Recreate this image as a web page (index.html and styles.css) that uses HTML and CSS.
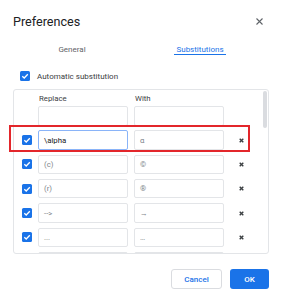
FILE: index.html
```html
<!DOCTYPE html>
<html>
<head>
<meta charset="utf-8">
<link rel="stylesheet" href="styles.css">
</head>
<body>
<div class="dialog">
  <div class="header">
    <div class="title">Preferences</div>
    <svg class="close" width="7" height="7" viewBox="0 0 7 7"><path d="M0.5 0.5L6.5 6.5M6.5 0.5L0.5 6.5" stroke="#5f6368" stroke-width="1.1" fill="none"/></svg>
  </div>
  <div class="tabs">
    <div class="tab"><span class="tab-label">General</span></div>
    <div class="tab active"><span class="tab-label">Substitutions</span></div>
  </div>
  <div class="auto">
    <span class="cb"><svg width="10" height="10" viewBox="0 0 10 10"><path d="M2.3 5.2L4.2 7L7.8 3.2" stroke="#fff" stroke-width="1.3" fill="none"/></svg></span>
    <span class="auto-label">Automatic substitution</span>
  </div>
  <div class="table">
    <div class="thead">
      <span></span><span class="th">Replace</span><span class="th">With</span><span></span>
    </div>
    <div class="rows">
      <span></span><div class="inp"></div><div class="inp"></div><span></span>

      <span class="cb"><svg width="10" height="10" viewBox="0 0 10 10"><path d="M2.3 5.2L4.2 7L7.8 3.2" stroke="#fff" stroke-width="1.3" fill="none"/></svg></span>
      <div class="inp focus dark">\alpha</div><div class="inp">α</div><svg class="del" width="5" height="5" viewBox="0 0 5 5"><path d="M0.7 0.7L4.3 4.3M4.3 0.7L0.7 4.3" stroke="#3c4043" stroke-width="1.4" fill="none"/></svg>

      <span class="cb"><svg width="10" height="10" viewBox="0 0 10 10"><path d="M2.3 5.2L4.2 7L7.8 3.2" stroke="#fff" stroke-width="1.3" fill="none"/></svg></span>
      <div class="inp">(c)</div><div class="inp">©</div><svg class="del" width="5" height="5" viewBox="0 0 5 5"><path d="M0.7 0.7L4.3 4.3M4.3 0.7L0.7 4.3" stroke="#3c4043" stroke-width="1.4" fill="none"/></svg>

      <span class="cb"><svg width="10" height="10" viewBox="0 0 10 10"><path d="M2.3 5.2L4.2 7L7.8 3.2" stroke="#fff" stroke-width="1.3" fill="none"/></svg></span>
      <div class="inp">(r)</div><div class="inp">®</div><svg class="del" width="5" height="5" viewBox="0 0 5 5"><path d="M0.7 0.7L4.3 4.3M4.3 0.7L0.7 4.3" stroke="#3c4043" stroke-width="1.4" fill="none"/></svg>

      <span class="cb"><svg width="10" height="10" viewBox="0 0 10 10"><path d="M2.3 5.2L4.2 7L7.8 3.2" stroke="#fff" stroke-width="1.3" fill="none"/></svg></span>
      <div class="inp">--&gt;</div><div class="inp">→</div><svg class="del" width="5" height="5" viewBox="0 0 5 5"><path d="M0.7 0.7L4.3 4.3M4.3 0.7L0.7 4.3" stroke="#3c4043" stroke-width="1.4" fill="none"/></svg>

      <span class="cb"><svg width="10" height="10" viewBox="0 0 10 10"><path d="M2.3 5.2L4.2 7L7.8 3.2" stroke="#fff" stroke-width="1.3" fill="none"/></svg></span>
      <div class="inp">...</div><div class="inp">…</div><svg class="del" width="5" height="5" viewBox="0 0 5 5"><path d="M0.7 0.7L4.3 4.3M4.3 0.7L0.7 4.3" stroke="#3c4043" stroke-width="1.4" fill="none"/></svg>

      <span></span><div class="inp"></div><div class="inp"></div><span></span>
    </div>
    <div class="scroll-thumb"></div>
  </div>
  <div class="footer">
    <button class="btn cancel">Cancel</button>
    <button class="btn ok">OK</button>
  </div>
  <div class="highlight"></div>
</div>
</body>
</html>
```

FILE: styles.css
```css
html, body {
  margin: 0;
  padding: 0;
  background: #fff;
}
body {
  font-family: Roboto, "Liberation Sans", Arial, sans-serif;
  color: #202124;
}
.dialog {
  position: relative;
  width: 283px;
  height: 300px;
  overflow: hidden;
  background: #fff;
}
.header {
  display: flex;
  justify-content: space-between;
  align-items: center;
  padding: 11px 20px 0 13px;
  height: 20px;
}
.title {
  font-size: 12.6px;
  color: #202124;
}
.close {
  display: block;
}
.tabs {
  display: flex;
  margin: 8px 19px 0 8px;
  height: 22px;
}
.tab {
  flex: 1;
  display: flex;
  justify-content: center;
}
.tab-label {
  font-size: 8px;
  color: #5f6368;
  padding: 6px 2px 0;
  height: 14px;
  box-sizing: border-box;
  line-height: 9px;
}
.tab.active .tab-label {
  color: #1a73e8;
  height: 16px;
  border-bottom: 1.3px solid #1a73e8;
}
.auto {
  display: flex;
  align-items: center;
  gap: 7px;
  padding: 0 0 0 20px;
  margin-top: 9px;
  height: 12px;
}
.auto-label {
  font-size: 8px;
  color: #3c4043;
}
.cb {
  width: 10px;
  height: 10px;
  background: #1a73e8;
  border-radius: 1.5px;
  display: inline-flex;
  align-items: center;
  justify-content: center;
}
.cb svg { display: block; }
.table {
  position: relative;
  margin: 7px 14px 0 13px;
  height: 165px;
  border: 1px solid #e3e5e8;
  border-radius: 3px;
  box-sizing: border-box;
  overflow: hidden;
}
.thead, .rows {
  display: grid;
  grid-template-columns: 10px 90px 90px 22px;
  column-gap: 6px;
  padding-left: 8px;
  align-items: center;
}
.thead {
  height: 16px;
}
.th {
  font-size: 7.8px;
  color: #3c4043;
  padding-left: 1px;
}
.rows {
  grid-auto-rows: 19.5px;
  row-gap: 4.83px;
}
.inp {
  height: 19.5px;
  box-sizing: border-box;
  border: 1px solid #e3e5e8;
  border-radius: 2px;
  font-size: 7.8px;
  color: #80868b;
  padding: 0 0 0 5px;
  display: flex;
  align-items: center;
}
.inp.dark { color: #202124; }
.inp.focus { border-color: #8ab4f8; }
.del {
  display: block;
  justify-self: center;
}
.scroll-thumb {
  position: absolute;
  top: 1px;
  right: 1px;
  width: 4px;
  height: 37px;
  border-radius: 2px;
  background: #dadce0;
}
.footer {
  display: flex;
  justify-content: flex-end;
  gap: 8px;
  padding-right: 14px;
  margin-top: 15px;
}
.btn {
  font-family: Roboto, "Liberation Sans", Arial, sans-serif;
  height: 20px;
  border-radius: 3px;
  font-size: 8px;
  font-weight: 500;
  padding: 0;
  box-sizing: border-box;
}
.cancel {
  width: 51px;
  background: #fff;
  color: #1a73e8;
  border: 1px solid #dadce0;
}
.ok {
  width: 39px;
  background: #1a73e8;
  color: #fff;
  border: none;
}
.highlight {
  position: absolute;
  left: 9px;
  top: 125px;
  width: 241px;
  height: 27px;
  box-sizing: border-box;
  border: 2px solid #e3262b;
}
```
